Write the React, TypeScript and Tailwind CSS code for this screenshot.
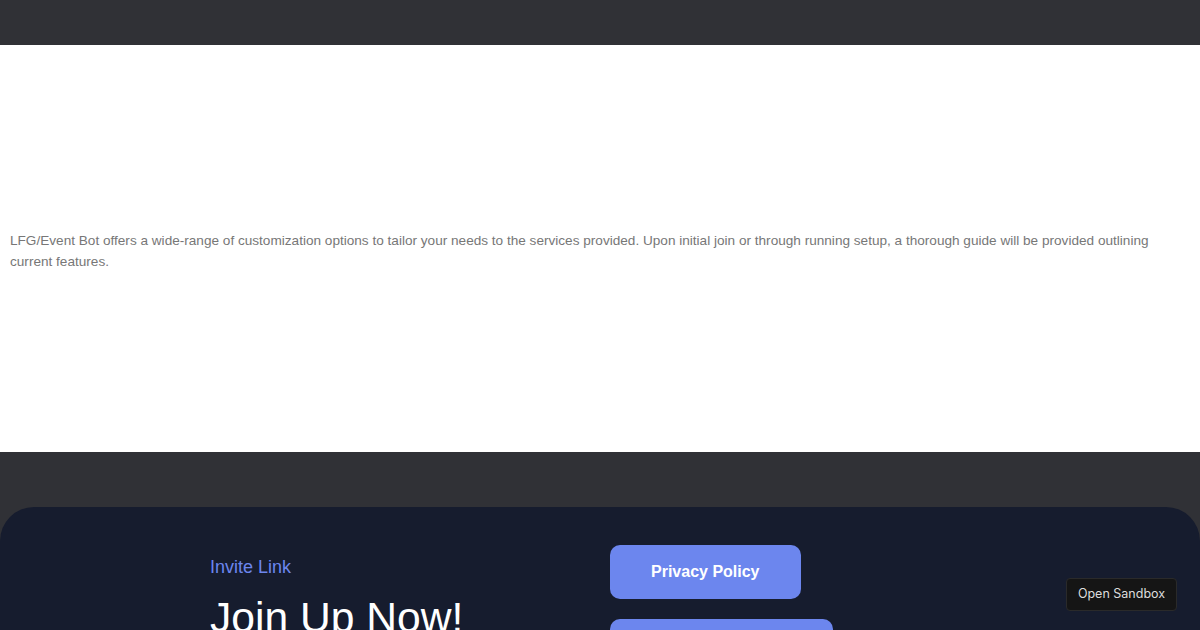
export default function App() {
  return (
    <div className="w-[1200px] h-[630px] overflow-hidden bg-[#303136]" style={{ fontFamily: '"Liberation Sans", Arial, sans-serif' }}>
      <div className="h-[45px] bg-[#303136]" />
      <div className="h-[407px] bg-white flex items-center">
        <p className="px-[10px] text-[13.6px] leading-[21px] text-[#777777] mt-[5px]">
          LFG/Event Bot offers a wide-range of customization options to tailor your needs to the services provided. Upon initial join or through running setup, a thorough guide will be provided outlining current features.
        </p>
      </div>
      <div className="pt-[55px] bg-[#303136]">
        <div className="relative bg-[#161c2e] rounded-t-[34px] h-[200px]">
          <div className="mx-auto w-[780px] grid grid-cols-[400px_380px] pt-[38px]">
            <div className="pt-[9px]">
              <div className="text-[18px] leading-[27px] text-[#6c86ee] font-light">Invite Link</div>
              <h2 className="mt-[11px] text-[42.6px] leading-[50px] text-white font-light">Join Up Now!</h2>
            </div>
            <div className="flex flex-col items-start gap-[20px]">
              <button className="h-[54px] px-[41px] rounded-[10px] bg-[#6c86ee] text-white text-[16px] font-bold">Privacy Policy</button>
              <button className="h-[54px] w-[223px] rounded-[10px] bg-[#6c86ee] text-white text-[16px] font-bold">Terms of Service</button>
            </div>
          </div>
          <div className="absolute left-[1066px] top-[71px] w-[111px] h-[33px] flex items-center justify-center rounded-[4px] border border-[#2a2a2a] bg-[#151515] text-[12.5px] text-[#dddddd]" style={{ fontFamily: 'Inter, sans-serif' }}>
            Open Sandbox
          </div>
        </div>
      </div>
    </div>
  );
}
